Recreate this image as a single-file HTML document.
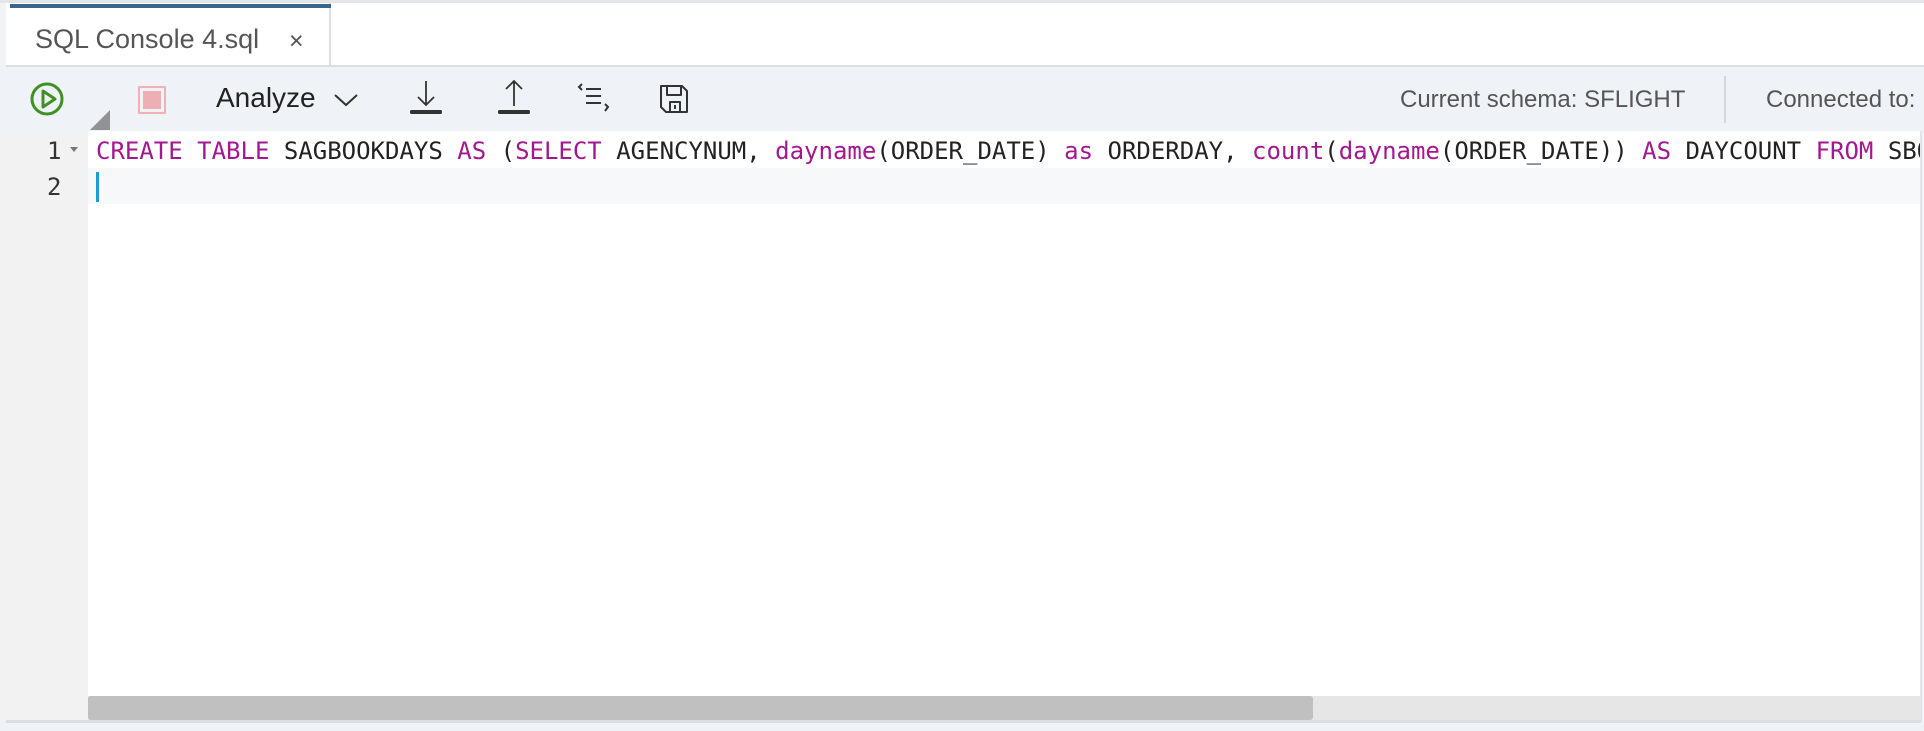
<!DOCTYPE html>
<html><head><style>
*{margin:0;padding:0;box-sizing:border-box}
body{width:1924px;height:728px;background:#eff2f7;position:relative;overflow:hidden;font-family:"Liberation Sans",sans-serif}
.abs{position:absolute}
.code{font-family:"DejaVu Sans Mono","Liberation Mono",monospace;font-size:24px;white-space:pre;color:#222}
.k{color:#a3178f}
</style></head><body>
<div class="abs" style="left:0;top:0;width:1924px;height:3px;background:#e3e5e8"></div>
<div class="abs" style="left:0;top:3px;width:1924px;height:63px;background:#fff"></div>
<div class="abs" style="left:0;top:3px;width:6px;height:63px;background:#f2f3f5"></div>
<div class="abs" style="left:6px;top:3px;width:325px;height:63px;background:#fff;border-right:2px solid #dcdee2"></div>
<div class="abs" style="left:10px;top:4px;width:321px;height:4px;background:#3b6689"></div>
<div class="abs" style="left:35px;top:24px;font-size:27px;color:#555">SQL Console 4.sql</div>
<div class="abs" style="left:289px;top:27px;font-size:25px;color:#555">×</div>
<div class="abs" style="left:6px;top:65px;width:1918px;height:2px;background:#dcdee2"></div>

<svg class="abs" style="left:0;top:67px" width="760" height="64">
<circle cx="47" cy="32" r="15" fill="none" stroke="#3f9126" stroke-width="3"/>
<path d="M43 24 L55 32 L43 40 Z M43 24 V40" fill="none" stroke="#3f9126" stroke-width="3" stroke-linejoin="round"/>
<rect x="139" y="20" width="26" height="26" fill="none" stroke="#f0b0b6" stroke-width="2"/>
<rect x="143" y="24" width="18" height="18" fill="#eeafb4"/>
<path d="M335 28 L346 38 L357 28" fill="none" stroke="#333" stroke-width="2"/>
<path d="M426 14 V38 M418 30 L426 38 L434 30" fill="none" stroke="#333" stroke-width="1.8"/>
<rect x="410" y="43" width="32" height="4" rx="1.5" fill="#333"/>
<path d="M514 14 V39 M506 22 L514 14 L522 22" fill="none" stroke="#333" stroke-width="1.8"/>
<rect x="498" y="43" width="32" height="4" rx="1.5" fill="#333"/>
<path d="M582 17 L579 20 L582 23 M586 22 H601 M586 29 H601 M586 36 H601 M605 37 L608 40 L605 44" fill="none" stroke="#333" stroke-width="2"/>
<path d="M662 19 H682 L687 24 V45 H666 L661 40 V19 Z M667 19 V28 H681 V19 M670 45 V35 H680 V45 M675 38 V42" fill="none" stroke="#333" stroke-width="2" stroke-linejoin="round"/>
</svg>
<div class="abs" style="left:216px;top:82px;font-size:28px;color:#222">Analyze</div>
<div class="abs" style="left:1400px;top:86px;font-size:24px;color:#555">Current schema: SFLIGHT</div>
<div class="abs" style="left:1724px;top:76px;width:2px;height:47px;background:#d3d6da"></div>
<div class="abs" style="left:1766px;top:86px;font-size:24px;color:#555">Connected to:</div>

<div class="abs" style="left:0;top:131px;width:88px;height:589px;background:#f2f2f2"></div>
<div class="abs" style="left:88px;top:131px;width:1832px;height:565px;background:#fff"></div>
<div class="abs" style="left:88px;top:168px;width:1832px;height:36px;background:#f7f8fa"></div>
<svg class="abs" style="left:90px;top:110px" width="22" height="22"><path d="M0 20 L20 20 L20 0 Z" fill="#929296"/></svg>
<div class="abs code" style="left:47px;top:137px;color:#333">1</div>
<div class="abs" style="left:70px;top:147px;width:0;height:0;border-left:4px solid transparent;border-right:4px solid transparent;border-top:5px solid #777"></div>
<div class="abs code" style="left:47px;top:173px;color:#333">2</div>
<div class="abs code" style="left:96px;top:137px"><span class="k">CREATE</span> <span class="k">TABLE</span> SAGBOOKDAYS <span class="k">AS</span> (<span class="k">SELECT</span> AGENCYNUM, <span class="k">dayname</span>(ORDER_DATE) <span class="k">as</span> ORDERDAY, <span class="k">count</span>(<span class="k">dayname</span>(ORDER_DATE)) <span class="k">AS</span> DAYCOUNT <span class="k">FROM</span> SBOOK</div>
<div class="abs" style="left:1920px;top:131px;width:4px;height:600px;background:#eff2f7"></div>
<div class="abs" style="left:1920px;top:131px;width:2px;height:592px;background:#e2e4e8"></div>
<div class="abs" style="left:96px;top:172px;width:3px;height:30px;background:#1a9ad6"></div>

<div class="abs" style="left:88px;top:696px;width:1832px;height:24px;background:#e6e6e6"></div>
<div class="abs" style="left:88px;top:696px;width:1225px;height:24px;background:#c0c0c0;border-radius:3px"></div>
<div class="abs" style="left:6px;top:720px;width:1914px;height:3px;background:#dcdde1"></div>
</body></html>
